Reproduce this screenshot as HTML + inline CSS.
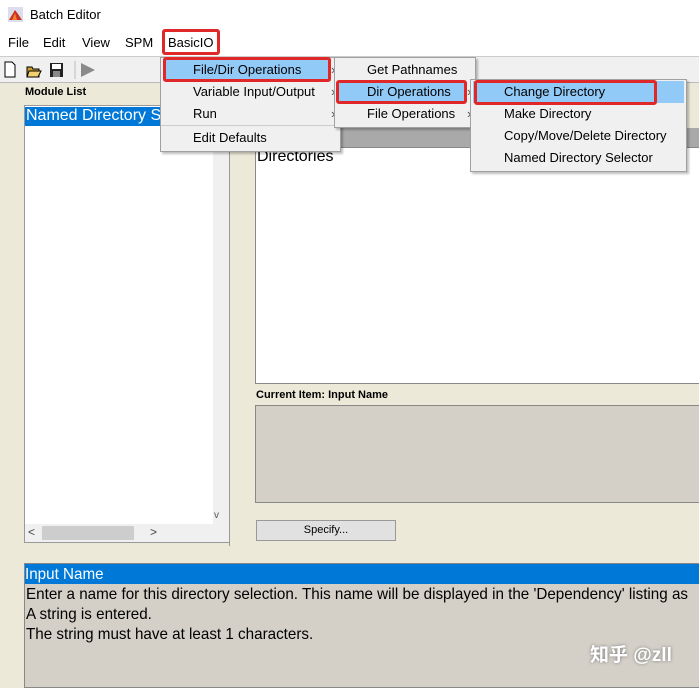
<!DOCTYPE html>
<html><head><meta charset="utf-8"><style>
*{margin:0;padding:0;box-sizing:border-box}
body{width:699px;height:682px;overflow:hidden;background:#ece9d8;font-family:"Liberation Sans",sans-serif;position:relative;color:#000}
.a{position:absolute}
.m{font-size:13px;white-space:nowrap}
.menu{background:#f0f0f0;border:1px solid #a0a0a0;box-shadow:2px 2px 2px rgba(0,0,0,.25)}
.hl{background:#91c9f7}
.red{border:3px solid #e02828;border-radius:3px}
.cond{transform:scaleX(.95);transform-origin:left top;white-space:nowrap;font-size:16px}
</style></head><body>
<div class="a" style="left:0;top:0;width:699px;height:31px;background:#fff"></div>
<svg class="a" style="left:8px;top:7px" width="15" height="15"><rect width="15" height="15" fill="#dde"/><path d="M1 13 L7 3 L10 7 L14 13 Z" fill="#c8321e"/><path d="M4 13 L7 6 L9 13Z" fill="#f08030"/></svg>
<div class="a m" style="left:30px;top:7px">Batch Editor</div>
<div class="a" style="left:0;top:31px;width:699px;height:25px;background:#fff"></div>
<div class="a m" style="left:8px;top:35px">File</div>
<div class="a m" style="left:43px;top:35px">Edit</div>
<div class="a m" style="left:82px;top:35px">View</div>
<div class="a m" style="left:125px;top:35px">SPM</div>
<div class="a red" style="left:162px;top:29px;width:58px;height:26px"></div>
<div class="a m" style="left:168px;top:35px">BasicIO</div>
<div class="a" style="left:0;top:56px;width:699px;height:27px;background:#f0f0f0;border-top:1px solid #ccc;border-bottom:1px solid #bbb"></div>
<svg class="a" style="left:3px;top:61px" width="100" height="18">
<path d="M2 1h7l3 3v12H2z" fill="#fff" stroke="#000"/>
<path d="M24 6h5l1 2h6v8H24z" fill="#c8a030" stroke="#000"/><path d="M26 10h12l-3 6H24z" fill="#f0d070" stroke="#000"/>
<rect x="47" y="2" width="13" height="14" fill="#222"/><rect x="49" y="3" width="9" height="5" fill="#fff"/><rect x="50" y="10" width="7" height="6" fill="#888"/>
<line x1="72" y1="0" x2="72" y2="18" stroke="#bbb"/>
<path d="M78 2l14 7-14 7z" fill="#8a8a8a"/></svg>
<div class="a" style="left:25px;top:86px;font-size:11px;font-weight:bold">Module List</div>
<div class="a" style="left:24px;top:105px;width:206px;height:438px;background:#fff;border:1px solid #999"></div>
<div class="a" style="left:213px;top:106px;width:16px;height:418px;background:#f0f0f0"></div>
<div class="a" style="left:214px;top:510px;font-size:10px;color:#555">v</div>
<div class="a" style="left:25px;top:524px;width:204px;height:18px;background:#f0f0f0"></div>
<div class="a" style="left:42px;top:526px;width:92px;height:14px;background:#cdcdcd"></div>
<div class="a" style="left:28px;top:525px;font-size:12px;color:#444">&lt;</div>
<div class="a" style="left:150px;top:525px;font-size:12px;color:#444">&gt;</div>
<div class="a" style="left:25px;top:107px;width:188px;height:19px;background:#0078d7;color:#fff;font-size:16px;padding-left:1px;overflow:hidden;white-space:nowrap">Named Directory S</div>
<div class="a" style="left:229px;top:86px;width:1px;height:460px;background:#999"></div>
<div class="a" style="left:230px;top:128px;width:469px;height:19px;background:#a9a9a9"></div>
<div class="a" style="left:255px;top:147px;width:450px;height:237px;background:#fff;border:1px solid #888"></div>
<div class="a" style="left:257px;top:148px;font-size:16px">Directories</div>
<div class="a" style="left:256px;top:389px;font-size:11px;font-weight:bold">Current Item: Input Name</div>
<div class="a" style="left:255px;top:405px;width:450px;height:98px;background:#d4d0c8;border:1px solid #888"></div>
<div class="a" style="left:256px;top:520px;width:140px;height:21px;background:#e1e1e1;border:1px solid #999;font-size:11px;text-align:center;line-height:19px">Specify...</div>
<div class="a" style="left:24px;top:563px;width:680px;height:125px;background:#d4d0c8;border:1px solid #888"></div>
<div class="a" style="left:25px;top:564px;width:674px;height:20px;background:#0078d7"></div>
<div class="a cond" style="left:25px;top:566px;color:#fff">Input Name</div>
<div class="a cond" style="left:26px;top:586px">Enter a name for this directory selection. This name will be displayed in the 'Dependency' listing as</div>
<div class="a cond" style="left:26px;top:606px">A string is entered.</div>
<div class="a cond" style="left:26px;top:626px">The string must have at least 1 characters.</div>
<div class="a" style="left:590px;top:640px;font-size:19px;color:#fff;text-shadow:0 0 3px #777;font-family:'Liberation Sans','Noto Sans CJK SC',sans-serif;font-weight:bold">知乎 @zll</div>

<div class="a menu" style="left:160px;top:57px;width:181px;height:95px"></div>
<div class="a hl" style="left:163px;top:59px;width:168px;height:22px"></div>
<div class="a red" style="left:163px;top:57px;width:168px;height:25px"></div>
<div class="a m" style="left:193px;top:62px">File/Dir Operations</div>
<div class="a m" style="left:193px;top:84px">Variable Input/Output</div>
<div class="a m" style="left:193px;top:106px">Run</div>
<div class="a" style="left:161px;top:125px;width:179px;height:1px;background:#ccc"></div>
<div class="a m" style="left:193px;top:130px">Edit Defaults</div>
<div class="a m" style="left:331px;top:62px;color:#555">›</div>
<div class="a m" style="left:331px;top:84px;color:#555">›</div>
<div class="a m" style="left:331px;top:106px;color:#555">›</div>

<div class="a menu" style="left:334px;top:57px;width:142px;height:71px"></div>
<div class="a hl" style="left:337px;top:81px;width:129px;height:22px"></div>
<div class="a red" style="left:336px;top:80px;width:131px;height:24px"></div>
<div class="a m" style="left:367px;top:62px">Get Pathnames</div>
<div class="a m" style="left:367px;top:84px">Dir Operations</div>
<div class="a m" style="left:367px;top:106px">File Operations</div>
<div class="a m" style="left:467px;top:84px;color:#555">›</div>
<div class="a m" style="left:467px;top:106px;color:#555">›</div>

<div class="a menu" style="left:470px;top:79px;width:217px;height:93px"></div>
<div class="a hl" style="left:473px;top:81px;width:211px;height:22px"></div>
<div class="a red" style="left:474px;top:80px;width:183px;height:25px"></div>
<div class="a m" style="left:504px;top:84px">Change Directory</div>
<div class="a m" style="left:504px;top:106px">Make Directory</div>
<div class="a m" style="left:504px;top:128px">Copy/Move/Delete Directory</div>
<div class="a m" style="left:504px;top:150px">Named Directory Selector</div>
</body></html>
